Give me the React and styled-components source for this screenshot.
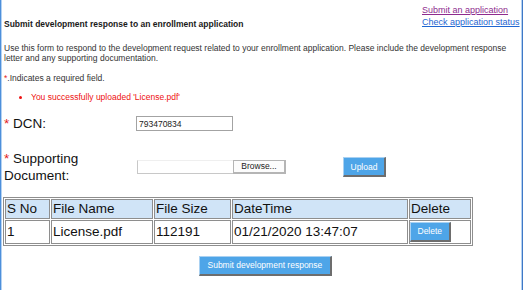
import React from 'react';
import styled, { createGlobalStyle } from 'styled-components';

const GlobalStyle = createGlobalStyle`
  html, body {
    margin: 0;
    padding: 0;
    background: #fff;
  }
  body {
    font-family: "Liberation Sans", Arial, sans-serif;
  }
`;

const Page = styled.div`
  box-sizing: border-box;
  width: 523px;
  height: 290px;
  padding: 5px 3px 0 3px;
  border-left: 1px solid #4d8fdb;
  border-right: 1px solid #3f78c6;
  box-shadow: inset 1px 0 #b4d2f2, inset -1px 0 #b4d2f2;
  color: #222;
  overflow: hidden;
`;

const Header = styled.div`
  display: flex;
  justify-content: space-between;
  align-items: flex-start;
`;

const Title = styled.h1`
  margin: 0;
  padding-top: 14px;
  font-size: 8.5px;
  line-height: 10px;
  font-weight: 700;
  color: #1a1a1a;
`;

const Links = styled.div`
  display: flex;
  flex-direction: column;
  width: 97px;
  font-size: 9px;
  line-height: 11.5px;
`;

const Link = styled.a`
  color: ${(p) => (p.$visited ? '#8e2b8e' : '#1f66d1')};
  text-decoration: underline;
  white-space: nowrap;
`;

const Intro = styled.p`
  margin: 14px 0 0;
  font-size: 8.5px;
  line-height: 10px;
  color: #333;
`;

const Required = styled.p`
  margin: 10px 0 0;
  font-size: 8.5px;
  line-height: 10px;
  color: #333;
`;

const Star = styled.span`
  color: #e31b1b;
`;

const Messages = styled.ul`
  margin: 9px 0 0;
  padding-left: 27px;
  font-size: 8.5px;
  line-height: 10px;
  color: #ee1111;
`;

const FormRow = styled.div`
  display: flex;
  align-items: center;
  margin-top: ${(p) => p.$gap}px;
`;

const Label = styled.label`
  width: 132px;
  flex: none;
  font-size: 13.5px;
  line-height: 17.5px;
  color: #111;
`;

const TextInput = styled.input`
  box-sizing: border-box;
  width: 97px;
  height: 15px;
  padding: 0 2px;
  margin: 0;
  border: 1px solid #a3a3a3;
  font-family: inherit;
  font-size: 8.5px;
  color: #222;
  outline: none;
`;

const FileBox = styled.div`
  display: flex;
  height: 14px;
  margin-left: 1px;
`;

const FileName = styled.div`
  width: 95px;
  border-left: 1px solid #c8c8c8;
  border-bottom: 1px solid #c8c8c8;
  border-top: 1px solid #efefef;
`;

const Browse = styled.div`
  box-sizing: border-box;
  width: 53px;
  height: 14px;
  border: 1px solid #b5b5b5;
  border-width: 1px 2px 2px 1px;
  background: #fcfcfc;
  font-size: 8.5px;
  line-height: 11px;
  text-align: center;
  color: #222;
`;

const BlueButton = styled.button`
  box-sizing: border-box;
  height: 20px;
  padding: 0 ${(p) => p.$pad || 8}px;
  margin: 0;
  margin-left: ${(p) => p.$ml || 0}px;
  background: #4ea5e8;
  border-style: solid;
  border-width: 1px 2px 2px 1px;
  border-color: #a9d1f2 #6d6d6d #6d6d6d #a9d1f2;
  color: #fff;
  font-family: inherit;
  font-size: 8.5px;
  cursor: pointer;
`;

const Table = styled.table`
  margin: 12px 0 0 -1px;
  width: 469px;
  table-layout: fixed;
  border: 1px solid #8e8e8e;
  border-spacing: 1px;
  font-size: 13.5px;
  color: #111;
`;

const Th = styled.th`
  box-sizing: border-box;
  height: 20px;
  padding: 0 1px;
  border: 1px solid #8e8e8e;
  background: #d0e4f7;
  font-weight: 400;
  text-align: left;
  line-height: 16px;
`;

const Td = styled.td`
  box-sizing: border-box;
  height: 24px;
  padding: 0 ${(p) => (p.$tight ? 0 : 1)}px;
  border: 1px solid #8e8e8e;
  background: #fff;
  line-height: 16px;
`;

const Footer = styled.div`
  display: flex;
  justify-content: flex-start;
  padding-left: 195px;
  margin-top: 10px;
`;

const files = [
  { no: 1, name: 'License.pdf', size: 112191, time: '01/21/2020 13:47:07' },
];

export default function App() {
  return (
    <>
      <GlobalStyle />
      <Page>
        <Header>
          <Title>Submit development response to an enrollment application</Title>
          <Links>
            <Link href="#" $visited>Submit an application</Link>
            <Link href="#">Check application status</Link>
          </Links>
        </Header>

        <Intro>
          Use this form to respond to the development request related to your enrollment
          application. Please include the development response letter and any supporting
          documentation.
        </Intro>

        <Required>
          <Star>*</Star>.Indicates a required field.
        </Required>

        <Messages>
          <li>You successfully uploaded 'License.pdf'</li>
        </Messages>

        <FormRow $gap={13}>
          <Label>
            <Star>*</Star> DCN:
          </Label>
          <TextInput defaultValue="793470834" />
        </FormRow>

        <FormRow $gap={17}>
          <Label>
            <Star>*</Star> Supporting Document:
          </Label>
          <FileBox>
            <FileName />
            <Browse>Browse...</Browse>
          </FileBox>
          <BlueButton $ml={57} $pad={6.5}>Upload</BlueButton>
        </FormRow>

        <Table>
          <colgroup>
            <col style={{ width: 45 }} />
            <col style={{ width: 102 }} />
            <col style={{ width: 77 }} />
            <col style={{ width: 176 }} />
            <col style={{ width: 62 }} />
          </colgroup>
          <thead>
            <tr>
              <Th>S No</Th>
              <Th>File Name</Th>
              <Th>File Size</Th>
              <Th>DateTime</Th>
              <Th>Delete</Th>
            </tr>
          </thead>
          <tbody>
            {files.map((f) => (
              <tr key={f.no}>
                <Td>{f.no}</Td>
                <Td>{f.name}</Td>
                <Td>{f.size}</Td>
                <Td>{f.time}</Td>
                <Td $tight>
                  <BlueButton $pad={6.5}>Delete</BlueButton>
                </Td>
              </tr>
            ))}
          </tbody>
        </Table>

        <Footer>
          <BlueButton $pad={7.5}>Submit development response</BlueButton>
        </Footer>
      </Page>
    </>
  );
}
